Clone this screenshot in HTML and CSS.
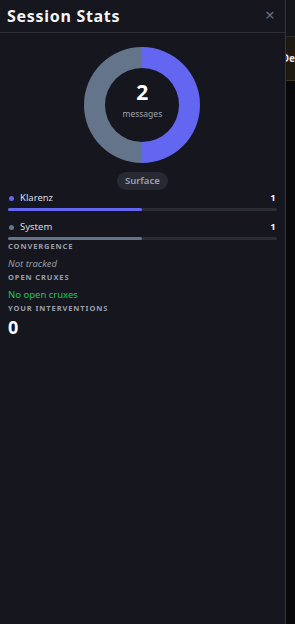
FILE: index.html
```html
<!DOCTYPE html>
<html lang="en">
<head>
    <meta charset="UTF-8">
    <meta name="viewport" content="width=device-width, initial-scale=1.0">
    <title>Session Stats</title>
    <link rel="stylesheet" href="styles.css">
</head>
<body>
    <div class="panel">
        <div class="panel-header">
            <h2>Session Stats</h2>
            <span class="close">&times;</span>
        </div>
        <div class="panel-body">
            <div class="donut-wrap">
                <div class="donut">
                    <div class="donut-hole">
                        <div class="donut-count">2</div>
                        <div class="donut-label">messages</div>
                    </div>
                </div>
                <span class="pill">Surface</span>
            </div>

            <div class="speaker">
                <div class="speaker-row">
                    <span class="dot dot-klarenz"></span>
                    <span class="speaker-name">Klarenz</span>
                    <span class="speaker-count">1</span>
                </div>
                <div class="bar"><div class="bar-fill fill-klarenz" style="width: 50%"></div></div>
            </div>
            <div class="speaker">
                <div class="speaker-row">
                    <span class="dot dot-system"></span>
                    <span class="speaker-name">System</span>
                    <span class="speaker-count">1</span>
                </div>
                <div class="bar"><div class="bar-fill fill-system" style="width: 50%"></div></div>
            </div>

            <div class="section-title">Convergence</div>
            <div class="muted">Not tracked</div>
            <div class="section-title">Open Cruxes</div>
            <div class="ok">No open cruxes</div>
            <div class="section-title">Your Interventions</div>
            <div class="big-number">0</div>
        </div>
    </div>
    <div class="side">
        <div class="side-top"></div>
        <div class="side-card">De</div>
    </div>
</body>
</html>
```

FILE: styles.css
```css
body {
    margin: 0;
    padding: 0;
    display: flex;
    height: 624px;
    background: #08080b;
    font-family: 'Noto Sans', sans-serif;
    overflow: hidden;
}

.panel {
    width: 287px;
    height: 624px;
    background: #15161e;
    border-right: 1px solid #34353d;
    color: #e5e7eb;
}

.panel-header {
    height: 32px;
    padding: 0 10px 0 7px;
    display: flex;
    align-items: center;
    justify-content: space-between;
    border-bottom: 1px solid #2e2f37;
}

.panel-header h2 {
    margin: 0;
    font-size: 16px;
    font-weight: bold;
    color: #f3f4f6;
    letter-spacing: 0.7px;
}

.close {
    font-size: 17px;
    color: #6b6e78;
    line-height: 1;
    margin-top: -4px;
}

.panel-body {
    padding: 14px 8px 0;
}

.donut-wrap {
    display: flex;
    flex-direction: column;
    align-items: center;
}

.donut {
    width: 116px;
    height: 116px;
    border-radius: 50%;
    background: conic-gradient(#6366f1 0 50%, #64748b 50% 100%);
    display: flex;
    align-items: center;
    justify-content: center;
}

.donut-hole {
    width: 74px;
    height: 74px;
    border-radius: 50%;
    background: #15161e;
    display: flex;
    flex-direction: column;
    align-items: center;
    justify-content: center;
}

.donut-count {
    font-size: 21px;
    font-weight: bold;
    color: #fff;
    line-height: 24px;
    margin-top: -10px;
}

.donut-label {
    font-size: 8.5px;
    line-height: 12px;
    color: #a1a5b0;
    margin-top: 4px;
}

.pill {
    margin-top: 9px;
    padding: 2px 8px 3px;
    border-radius: 9px;
    background: #282a33;
    color: #9ca0ab;
    font-size: 9.5px;
    font-weight: 600;
}

.speaker {
    margin-top: 2px;
}

.speaker + .speaker {
    margin-top: 10px;
}

.speaker-row {
    display: flex;
    align-items: center;
    height: 12px;
    line-height: 12px;
}

.dot {
    width: 5px;
    height: 5px;
    border-radius: 50%;
    margin: 0 6px 0 1px;
}

.dot-klarenz { background: #6366f1; }
.dot-system { background: #64748b; }

.speaker-name {
    font-size: 9.5px;
    color: #d8dbe2;
    flex: 1;
}

.speaker-count {
    font-size: 9.5px;
    font-weight: bold;
    color: #f3f4f6;
    margin-right: 1px;
}

.bar {
    height: 3px;
    background: #2b2d35;
    border-radius: 2px;
    margin-top: 4px;
}

.bar-fill {
    height: 100%;
    border-radius: 2px;
}

.fill-klarenz { background: #6366f1; }
.fill-system { background: #64748b; }

.section-title {
    font-size: 7.5px;
    font-weight: bold;
    letter-spacing: 0.9px;
    text-transform: uppercase;
    color: #9a9eac;
    margin-top: 2px;
    line-height: 10px;
}

.speaker + .section-title {
    margin-top: 1px;
}

.muted {
    font-size: 9.5px;
    font-style: italic;
    color: #979ba6;
    margin-top: 7px;
    line-height: 12px;
}

.ok {
    font-size: 9.5px;
    color: #22c55e;
    margin-top: 7px;
    line-height: 12px;
}

.big-number {
    font-size: 18px;
    font-weight: bold;
    color: #fff;
    margin-top: 4px;
    line-height: 20px;
}

.side {
    flex: 1;
    display: flex;
    flex-direction: column;
}

.side-top {
    height: 36px;
    background: #141519;
    border-bottom: 1px solid #2a2b30;
}

.side-card {
    height: 43px;
    background: #1e1a12;
    border-bottom: 1px solid #3a3320;
    color: #e5e7eb;
    font-size: 10px;
    font-weight: bold;
    line-height: 43px;
    white-space: nowrap;
    overflow: hidden;
    text-indent: -4px;
}
```
